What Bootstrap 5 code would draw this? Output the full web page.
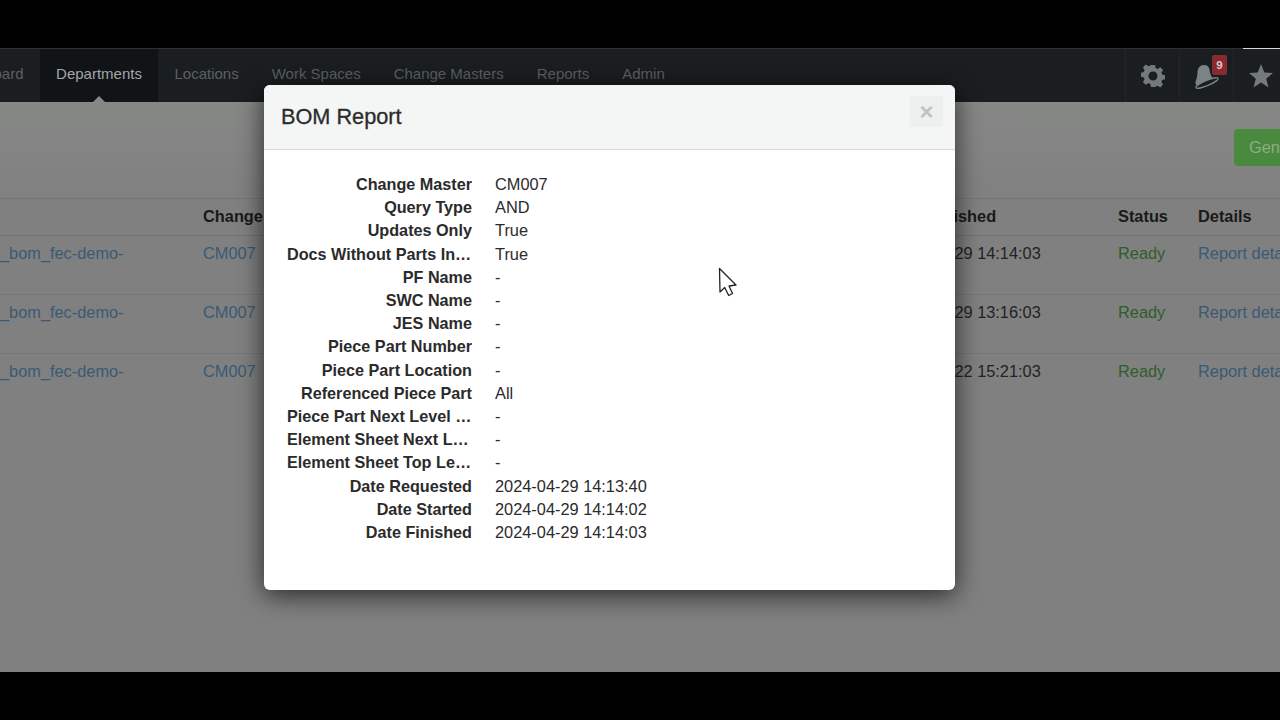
<!DOCTYPE html>
<html lang="en">
<head>
<meta charset="utf-8">
<title>BOM Report</title>
<link href="https://cdn.jsdelivr.net/npm/bootstrap@5.3.0/dist/css/bootstrap.min.css" rel="stylesheet">
<style>
body{background:#000;font-family:"Liberation Sans",Arial,sans-serif;font-size:16.35px;color:#222;height:720px;overflow:hidden}
.stage{height:624px;margin-top:48px;background:#808080;position:relative;overflow:hidden}
.topbar{height:54px;background:#1a1e20;border-top:1px solid #2e3235;flex-wrap:nowrap;position:relative}
.topbar::before{content:"";position:absolute;right:0;top:-1px;width:37px;height:1px;background:#d8d8d8}
.tab{display:block;flex:none;height:53px;line-height:49px;padding:0 16.5px;color:#5b6062;font-size:15px;text-decoration:none;white-space:nowrap;position:relative}
.tab-cut{padding:0 16.5px 0 0;width:40px;direction:rtl;overflow:hidden;text-align:right}
.tab-on{background:#111416;color:#a3a6a7;width:118px;padding:0;text-align:center}
.tab-on::after{content:"";position:absolute;left:50%;bottom:0;margin-left:-6px;border:6px solid transparent;border-top:0;border-bottom-color:#868886}
.tool-set{margin-right:-7px}
.tool{width:54px;height:53px;border-left:1px solid #212628;position:relative;flex:none}
.bell-badge{position:absolute;left:32px;top:6px;width:15px;height:20px;background:#8a2a30;color:#d9c8c8;font-size:11.500px;font-weight:700;line-height:20px;text-align:center;border-radius:2px}
.toolbar{height:96px;padding-top:27px;padding-right:0;margin-right:-40px;background:linear-gradient(#868886,#808080)}
.gen-btn{height:37px;width:86px;padding:0 15px;background:#4a8a3e;border:0;color:#8fac88;border-radius:4px 0 0 4px;font-size:16.35px;text-align:left;line-height:37px}
.gen-btn:hover{background:#4a8a3e;color:#8fac88}
.report-wrap{border-top:1px solid #757575;width:1400px}
.report{--bs-table-bg:transparent;--bs-table-color:#232323;--bs-table-border-color:#737373;table-layout:fixed;margin:0;width:1400px;font-size:16.35px}
.report th{font-weight:700;color:#191919;padding:7px 0 8px;line-height:21px;border-bottom:1px solid #737373;white-space:nowrap}
.report td{padding:6px 0 29px;line-height:23px;white-space:nowrap;border-bottom:1px solid #767676}
.report tr:last-child td{border-bottom:0}
.c1{width:203px}.c2{width:686px}.c3{width:229px}.c4{width:80px}
.report a{color:#3a5a74;text-decoration:none}
.ready{color:#2f5d2a}
.dialog{position:absolute;left:264px;top:37px;width:691px;z-index:5}
.dialog .modal-content{border:0;border-radius:6px;box-shadow:0 5px 26px rgba(0,0,0,.7);background:#fff;overflow:hidden}
.dialog .modal-header{height:65px;padding:0 12px 0 17px;background:#f4f5f5;border-bottom:1px solid #d8d8d8;border-radius:0}
.dialog .modal-title{font-size:21.7px;font-weight:400;color:#2b2b2b;-webkit-text-stroke:.3px #2b2b2b;line-height:1;margin-top:0}
.shut{width:33px;height:31px;padding:0;border:0;background:#eeefef;color:#c2c2c2;font-size:24px;font-weight:700;line-height:28px;margin-top:-11px;text-align:center;border-radius:2px}
.dialog .modal-body{padding:23px 0 46px 23px}
.facts{display:grid;grid-template-columns:185px 1fr;column-gap:23px;margin:0;line-height:23.2px;font-size:16.35px}
.facts dt{font-weight:700;font-size:16.2px;color:#2b2b2b;text-align:right;overflow:hidden;text-overflow:ellipsis;white-space:nowrap;margin:0}
.facts dd{margin:0;color:#2b2b2b}
.pointer{position:absolute;left:718px;top:219px;z-index:9}
</style>
</head>
<body>
<div class="stage d-flex flex-column">
  <nav class="topbar d-flex align-items-start">
    <a class="tab tab-cut" href="#">Dashboard</a>
    <a class="tab tab-on" href="#">Departments</a>
    <a class="tab" href="#">Locations</a>
    <a class="tab" href="#">Work Spaces</a>
    <a class="tab" href="#">Change Masters</a>
    <a class="tab" href="#">Reports</a>
    <a class="tab" href="#">Admin</a>
    <div class="tool-set ms-auto d-flex">
      <div class="tool d-flex align-items-center justify-content-center">
        <svg width="24" height="24" viewBox="0 0 24 24" fill="#74797a"><path fill-rule="evenodd" d="M10 1h4l.7 3.100 1.900.8 2.700-1.700 2.800 2.800-1.700 2.700.8 1.900 3 .7v4l-3 .7-.8 1.900 1.700 2.700-2.800 2.800-2.700-1.700-1.900.8L14 23h-4l-.7-3.100-1.900-.8-2.700 1.700-2.800-2.800 1.700-2.700-.8-1.900-3-.7v-4l3-.7.8-1.900-1.700-2.700 2.800-2.800 2.700 1.700 1.900-.8zM12 7.500a4.500 4.500 0 1 0 0 9 4.500 4.500 0 0 0 0-9z"/></svg>
      </div>
      <div class="tool d-flex align-items-center justify-content-center">
        <svg width="28" height="28" viewBox="0 0 28 28" fill="none"><path d="M11 3C7 3 4.500 6 4.500 10.500c0 4-1 6-2 9.500-.5 2 1 4 4 3.500 5-1 10-3.500 13.500-7-1.500-1.500-2.500-3.500-3-6.500C16.500 5.500 15 3 11 3z" fill="#788486"/><ellipse cx="14" cy="21" rx="12" ry="2.600" transform="rotate(-23 14 21)" stroke="#788486" stroke-width="1.300" fill="#1a1e20"/></svg>
        <span class="bell-badge">9</span>
      </div>
      <div class="tool d-flex align-items-center justify-content-center">
        <svg width="24" height="24" viewBox="0 0 24 24" fill="#74797a"><path d="M12 0l3.300 8.500 8.700.5-6.800 5.700 2.300 8.800L12 18.600 4.500 23.500l2.300-8.800L0 9l8.700-.5z"/></svg>
      </div>
    </div>
  </nav>
  <div class="toolbar d-flex justify-content-end">
    <button class="btn gen-btn" type="button">Generate</button>
  </div>
  <div class="report-wrap">
    <table class="table report">
      <thead>
        <tr><th class="c1"></th><th class="c2">Change Master</th><th class="c3">Date Finished</th><th class="c4">Status</th><th>Details</th></tr>
      </thead>
      <tbody>
        <tr><td><a href="#">_bom_fec-demo-</a></td><td><a href="#">CM007</a></td><td>2024-04-29 14:14:03</td><td class="ready">Ready</td><td><a href="#">Report details</a></td></tr>
        <tr><td><a href="#">_bom_fec-demo-</a></td><td><a href="#">CM007</a></td><td>2024-04-29 13:16:03</td><td class="ready">Ready</td><td><a href="#">Report details</a></td></tr>
        <tr><td><a href="#">_bom_fec-demo-</a></td><td><a href="#">CM007</a></td><td>2024-04-22 15:21:03</td><td class="ready">Ready</td><td><a href="#">Report details</a></td></tr>
      </tbody>
    </table>
  </div>
  <div class="dialog">
    <div class="modal-content">
      <div class="modal-header d-flex justify-content-between">
        <h5 class="modal-title">BOM Report</h5>
        <button class="shut" type="button" aria-label="Close">×</button>
      </div>
      <div class="modal-body">
        <dl class="facts">
          <dt>Change Master</dt><dd>CM007</dd>
          <dt>Query Type</dt><dd>AND</dd>
          <dt>Updates Only</dt><dd>True</dd>
          <dt>Docs Without Parts Included</dt><dd>True</dd>
          <dt>PF Name</dt><dd>-</dd>
          <dt>SWC Name</dt><dd>-</dd>
          <dt>JES Name</dt><dd>-</dd>
          <dt>Piece Part Number</dt><dd>-</dd>
          <dt>Piece Part Location</dt><dd>-</dd>
          <dt>Referenced Piece Part</dt><dd>All</dd>
          <dt>Piece Part Next Level Number</dt><dd>-</dd>
          <dt>Element Sheet Next Level Number</dt><dd>-</dd>
          <dt>Element Sheet Top Level Number</dt><dd>-</dd>
          <dt>Date Requested</dt><dd>2024-04-29 14:13:40</dd>
          <dt>Date Started</dt><dd>2024-04-29 14:14:02</dd>
          <dt>Date Finished</dt><dd>2024-04-29 14:14:03</dd>
        </dl>
      </div>
    </div>
  </div>
  <svg class="pointer" width="20" height="30" viewBox="0 0 20 30"><path d="M1.500 1.500 2 25l4.700-4.500 4 8 3.800-2-3.500-7.500 7-1z" fill="#fff" stroke="#222" stroke-width="1.300" stroke-linejoin="round"/></svg>
</div>
<script src="https://cdn.jsdelivr.net/npm/bootstrap@5.3.0/dist/js/bootstrap.bundle.min.js"></script>
</body>
</html>
